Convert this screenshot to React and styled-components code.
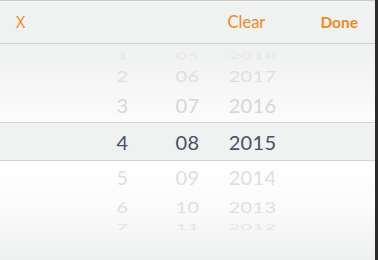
import React from 'react'
import styled, { createGlobalStyle } from 'styled-components'

const GlobalStyle = createGlobalStyle`
  html, body {
    margin: 0;
    padding: 0;
    background: #2b2b2b;
  }
  body {
    font-family: Lato, 'Open Sans', sans-serif;
  }
`

const Sheet = styled.div`
  width: 375px;
  height: 260px;
  overflow: hidden;
  background: #fff;
  border-top: 1px solid #c9cacd;
  box-sizing: border-box;
`

const Toolbar = styled.div`
  display: flex;
  align-items: center;
  height: 42px;
  padding: 0 17px 0 16px;
  background: #f0f1f1;
  border-bottom: 1px solid #cfd0d3;
  color: #f0891f;
  font-size: 16px;
`

const Close = styled.span`
  font-family: 'Open Sans', sans-serif;
  font-size: 16px;
  font-weight: 400;
  margin-right: auto;
`

const Action = styled.span`
  font-weight: ${(p) => (p.bold ? 700 : 400)};
  font-size: ${(p) => (p.bold ? '15.5px' : '16.5px')};
  margin-left: ${(p) => (p.bold ? '55px' : '0')};
`

const Wheel = styled.div`
  display: flex;
  flex-direction: column;
  height: 216px;
  padding-top: 5px;
  box-sizing: border-box;
  background: linear-gradient(
    to bottom,
    #eff0f0 0%,
    #fbfbfb 34%,
    #fff 55%,
    #fafafa 78%,
    #eff0f0 100%
  );
`

const Row = styled.div`
  display: flex;
  justify-content: center;
  align-items: center;
  height: ${(p) => p.h}px;
  flex-shrink: 0;
  box-sizing: border-box;
  ${(p) =>
    p.selected &&
    `
    background: #f0f1f1;
    border-top: 1px solid #d5d6d9;
    border-bottom: 1px solid #d5d6d9;
  `}
`

const Cell = styled.span`
  width: 65px;
  text-align: center;
  font-size: 20px;
  line-height: 1;
  color: ${(p) => p.color};
  transform: scaleY(${(p) => p.scale});
  letter-spacing: 0.3px;
`

// offset from the selected row -> row height, text squash, colour
const rows = [
  { k: -3, h: 14, scale: 0.38, color: '#e6e7e8' },
  { k: -2, h: 26, scale: 0.72, color: '#dfe0e2' },
  { k: -1, h: 33, scale: 0.93, color: '#d5d7da' },
  { k: 0, h: 39, scale: 1, color: '#4b5265' },
  { k: 1, h: 33, scale: 0.93, color: '#dedfe2' },
  { k: 2, h: 26, scale: 0.72, color: '#dfe0e2' },
  { k: 3, h: 14, scale: 0.42, color: '#e4e5e7' },
]

export default function App() {
  return (
    <>
      <GlobalStyle />
      <Sheet>
        <Toolbar>
          <Close>X</Close>
          <Action>Clear</Action>
          <Action bold>Done</Action>
        </Toolbar>
        <Wheel>
          {rows.map((r) => (
            <Row key={r.k} h={r.h} selected={r.k === 0}>
              <Cell color={r.color} scale={r.scale}>
                {4 + r.k}
              </Cell>
              <Cell color={r.color} scale={r.scale}>
                {String(8 + r.k).padStart(2, '0')}
              </Cell>
              <Cell color={r.color} scale={r.scale}>
                {2015 - r.k}
              </Cell>
            </Row>
          ))}
        </Wheel>
      </Sheet>
    </>
  )
}
